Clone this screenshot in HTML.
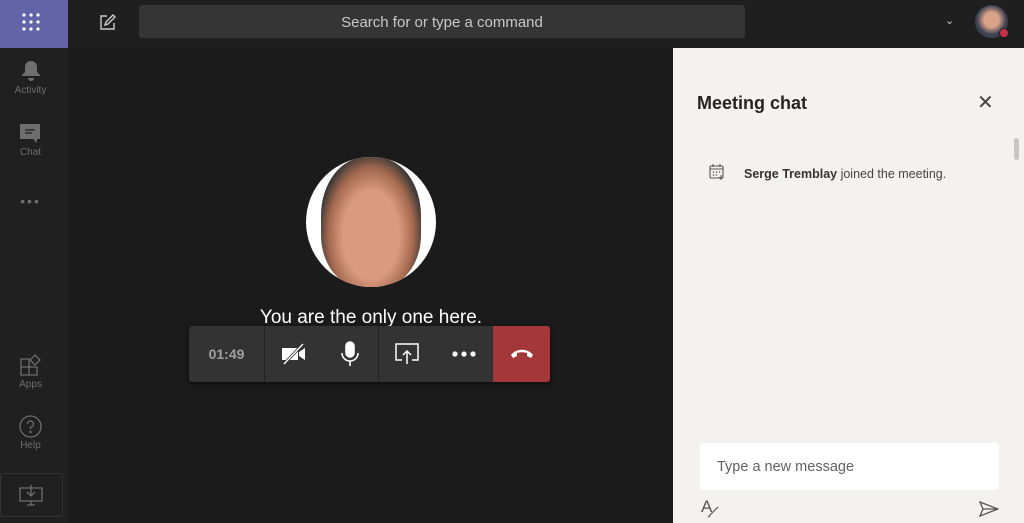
<!DOCTYPE html>
<html><head><meta charset="utf-8"><style>
*{margin:0;padding:0;box-sizing:border-box}
body{width:1024px;height:523px;overflow:hidden;background:#1b1b1b;font-family:"Liberation Sans",sans-serif;position:relative}
.a{position:absolute}
.lbl{color:#6e6e6e;font-size:10px;text-align:center;width:61px;left:0}
</style></head><body>
<div class="a" style="left:0;top:0;width:1024px;height:48px;background:#1f1f1f"></div>
<div class="a" style="left:0;top:0;width:68px;height:48px;background:#6264a7"></div>
<svg class="a" style="top:13px;left:22px" width="18" height="18"><g fill="#fff"><circle cx="2" cy="2" r="1.6"/><circle cx="9" cy="2" r="1.6"/><circle cx="16" cy="2" r="1.6"/><circle cx="2" cy="9" r="1.6"/><circle cx="9" cy="9" r="1.6"/><circle cx="16" cy="9" r="1.6"/><circle cx="2" cy="16" r="1.6"/><circle cx="9" cy="16" r="1.6"/><circle cx="16" cy="16" r="1.6"/></g></svg>
<div class="a" style="left:0;top:48px;width:68px;height:475px;background:#202020"></div>
<svg class="a" style="left:99px;top:13px" width="18" height="18" fill="none" stroke="#ccc" stroke-width="1.4"><path d="M8 3H2v13h13V10"/><path d="M6 12l1-3 7-7 2 2-7 7z"/></svg>
<div class="a" style="left:139px;top:5px;width:606px;height:33px;background:#353535;border-radius:3px;color:#c8c8c8;font-size:15px;text-align:center;line-height:35px">Search for or type a command</div>
<div class="a" style="left:945px;top:14px;color:#ccc;font-size:11px">⌄</div>
<div class="a" style="left:975px;top:5px;width:33px;height:33px;border-radius:50%;background:radial-gradient(circle at 50% 45%,#d9a389 0 30%,#3a4050 60%)"></div>
<div class="a" style="left:999px;top:28px;width:10px;height:10px;border-radius:50%;background:#c4314b;border:1.5px solid #1f1f1f"></div>
<svg class="a" style="left:21px;top:60px" width="20" height="22" fill="#6e6e6e"><path d="M10 1c-4 0-6 3-6 6v5l-3 3v1h18v-1l-3-3V7c0-3-2-6-6-6z"/><path d="M7 18h6a3 3 0 0 1-6 0z"/></svg>
<div class="a lbl" style="top:85px">Activity</div>
<svg class="a" style="left:19px;top:123px" width="22" height="21" fill="#6e6e6e"><path d="M1 1h20v15h-3v4l-4-4H1z"/><path d="M6 7h10M6 10h7" stroke="#202020" stroke-width="1.3"/></svg>
<div class="a lbl" style="top:147px">Chat</div>
<div class="a lbl" style="top:193px;font-size:14px;letter-spacing:2px">•••</div>
<svg class="a" style="left:20px;top:354px" width="22" height="22" fill="none" stroke="#6e6e6e" stroke-width="1.3"><path d="M1 5h8v8H1zM1 13h8v8H1zM9 13h8v8H9z"/><path d="M15 1l5 5-5 5-5-5z"/></svg>
<div class="a lbl" style="top:379px">Apps</div>
<svg class="a" style="left:19px;top:415px" width="23" height="23" fill="none" stroke="#6e6e6e" stroke-width="1.3"><circle cx="11.5" cy="11.5" r="10.5"/><path d="M8.5 9a3 3 0 1 1 4 2.8c-1 .5-1 1-1 2.5"/><circle cx="11.5" cy="17" r=".6" fill="#6e6e6e"/></svg>
<div class="a lbl" style="top:440px">Help</div>
<div class="a" style="left:0;top:473px;width:63px;height:44px;border:1px solid #333;border-radius:3px"></div>
<svg class="a" style="left:19px;top:484px" width="24" height="22" fill="none" stroke="#6e6e6e" stroke-width="1.3"><path d="M1 4h22v13H1zM8 21h8M12 17v4M12 1v11M8 8l4 4 4-4"/></svg>
<div class="a" style="left:306px;top:157px;width:130px;height:130px;border-radius:50%;background:#fff;overflow:hidden"><div style="position:absolute;left:15px;top:0;width:100px;height:130px;border-radius:45% 45% 40% 40%;background:radial-gradient(ellipse at 50% 60%,#d99b80 0 40%,#a5694f 60%,#3b3836 75%)"></div></div>
<div class="a" style="left:200px;top:307px;width:342px;text-align:center;color:#fff;font-size:19px">You are the only one here.</div>
<div class="a" style="left:189px;top:326px;width:361px;height:56px;background:#333;border-radius:3px;box-shadow:0 2px 6px rgba(0,0,0,.5)"></div>
<div class="a" style="left:189px;top:326px;width:75px;height:56px;color:#a0a0a0;font-size:14px;font-weight:bold;text-align:center;line-height:56px">01:49</div>
<div class="a" style="left:264px;top:326px;width:1px;height:56px;background:#222"></div>
<div class="a" style="left:378px;top:326px;width:1px;height:56px;background:#222"></div>
<svg class="a" style="left:281px;top:343px" width="26" height="22" fill="#fff"><path d="M1 5h16v12H1zM18 9l6-4v12l-6-4z"/><path d="M3 21L22 1" stroke="#333" stroke-width="3"/><path d="M3 21L22 1" stroke="#fff" stroke-width="1.3"/></svg>
<svg class="a" style="left:340px;top:341px" width="20" height="26" fill="none" stroke="#fff" stroke-width="1.6"><rect x="6" y="1" width="8" height="15" rx="4" fill="#fff"/><path d="M2 12a8 8 0 0 0 16 0M10 20v5"/></svg>
<svg class="a" style="left:395px;top:343px" width="24" height="22" fill="none" stroke="#fff" stroke-width="1.5"><path d="M7 17H1V1h22v16h-6M12 21V8M8 12l4-4 4 4"/></svg>
<svg class="a" style="left:452px;top:350px" width="24" height="8" fill="#fff"><circle cx="3" cy="4" r="2.6"/><circle cx="12" cy="4" r="2.6"/><circle cx="21" cy="4" r="2.6"/></svg>
<div class="a" style="left:493px;top:326px;width:57px;height:56px;background:#a4373a;border-radius:0 3px 3px 0"></div>
<svg class="a" style="left:510px;top:347px" width="24" height="12" fill="#fff"><path d="M1 8c5-7 17-7 22 0l-2 3-4-2V6c-3-1-7-1-10 0v3l-4 2z"/></svg>
<div class="a" style="left:673px;top:48px;width:351px;height:475px;background:#f3f2f1"></div>
<div class="a" style="left:697px;top:93px;font-size:18px;font-weight:bold;color:#252423">Meeting chat</div>
<div class="a" style="left:977px;top:90px;font-size:20px;color:#444">✕</div>
<div class="a" style="left:1014px;top:138px;width:5px;height:22px;border-radius:3px;background:#c8c6c4"></div>
<svg class="a" style="left:709px;top:164px" width="17" height="17" fill="none" stroke="#555" stroke-width="1.1"><rect x="1" y="2" width="13" height="12" rx="1"/><path d="M4 0v3M11 0v3M1 5h13M12 11v5M9.5 13.5h5"/><g fill="#555" stroke="none"><circle cx="4.5" cy="8" r=".8"/><circle cx="7.5" cy="8" r=".8"/><circle cx="10.5" cy="8" r=".8"/><circle cx="4.5" cy="11" r=".8"/><circle cx="7.5" cy="11" r=".8"/></g></svg>
<div class="a" style="left:744px;top:167px;font-size:12.5px;color:#444"><b style="color:#333">Serge Tremblay</b> joined the meeting.</div>
<div class="a" style="left:700px;top:443px;width:299px;height:47px;background:#fff;border-radius:3px;color:#616161;font-size:14.5px;line-height:49px;padding-left:17px">Type a new message</div>
<div class="a" style="left:701px;top:497px;font-size:17px;color:#555">A</div>
<svg class="a" style="left:706px;top:504px" width="14" height="14" fill="none" stroke="#555" stroke-width="1.2"><path d="M3 12l9-9M2 13l2-1"/></svg>
<svg class="a" style="left:979px;top:501px" width="20" height="16" fill="none" stroke="#555" stroke-width="1.3"><path d="M1 1l18 7-18 7 3-7zM4 8h15"/></svg>
</body></html>
